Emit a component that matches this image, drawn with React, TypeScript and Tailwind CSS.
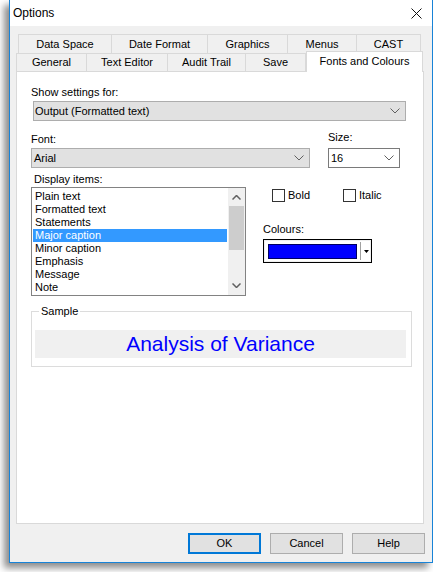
import React from "react";

const font = { fontFamily: '"Liberation Sans", Arial, sans-serif' };

function Chevron({ className = "" }: { className?: string }) {
  return (
    <svg width="10" height="6" viewBox="0 0 10 6" className={className}>
      <polyline points="0.5,0.5 5,5 9.5,0.5" fill="none" stroke="#606060" strokeWidth="1" />
    </svg>
  );
}

const row1 = [
  { label: "Data Space", w: "w-[94px]" },
  { label: "Date Format", w: "w-[96px]" },
  { label: "Graphics", w: "w-[80px]" },
  { label: "Menus", w: "w-[69px]" },
  { label: "CAST", w: "w-[64px]" },
];

const row2 = [
  { label: "General", w: "w-[71px]" },
  { label: "Text Editor", w: "w-[81px]" },
  { label: "Audit Trail", w: "w-[78px]" },
  { label: "Save", w: "w-[60px]" },
];

const items = [
  "Plain text",
  "Formatted text",
  "Statements",
  "Major caption",
  "Minor caption",
  "Emphasis",
  "Message",
  "Note",
];

export default function App() {
  return (
    <div className="w-[433px] h-[572px] bg-white pl-[9px] text-[11px] text-black" style={font}>
      <div className="w-[424px] h-[563px] flex flex-col bg-[#f0f0f0] border-x border-b border-[#1883d7] shadow-[-5px_5px_7px_rgba(0,0,0,0.45)]">
        {/* Title bar */}
        <div className="h-[26px] bg-white flex items-center justify-between pl-[3px] pr-[10px]">
          <span className="leading-[15px] text-[12px]">Options</span>
          <svg width="11" height="11" viewBox="0 0 11 11">
            <path d="M0.5 0.5 L10.5 10.5 M10.5 0.5 L0.5 10.5" stroke="#111" strokeWidth="1" />
          </svg>
        </div>

        <div className="flex-1 pt-[8px] pl-[6px]">
          {/* Tabs */}
          <div className="flex pl-[2px]">
            {row1.map((t, i) => (
              <div
                key={t.label}
                className={`${t.w} h-[19px] border-t border-r border-[#d9d9d9] ${i === 0 ? "border-l" : ""} flex items-center justify-center leading-[15px]`}
              >
                {t.label}
              </div>
            ))}
          </div>
          <div className="flex items-end h-[18px]">
            {row2.map((t, i) => (
              <div
                key={t.label}
                className={`${t.w} h-[18px] border-t border-r border-[#d9d9d9] ${i === 0 ? "border-l" : ""} flex items-center justify-center leading-[15px]`}
              >
                {t.label}
              </div>
            ))}
            <div className="w-[117px] h-[21px] -mb-px relative z-10 bg-white border-x border-t border-[#d9d9d9] flex items-start justify-center pt-[2px] leading-[15px]">
              Fonts and Colours
            </div>
          </div>

          {/* Panel */}
          <div className="w-[408px] h-[453px] bg-white border border-[#d9d9d9] px-[14px]">
            <div className="mt-[13px] leading-[15px]">Show settings for:</div>
            <div className="mt-[1px] ml-[2px] w-[373px] h-[20px] bg-[#e1e1e1] border border-[#adadad] flex items-center justify-between pl-[1px] pr-[5px] leading-[15px]">
              <span>Output (Formatted text)</span>
              <Chevron />
            </div>

            <div className="flex mt-[9px]">
              <div className="w-[279px]">
                <div className="leading-[15px] mt-[2px]">Font:</div>
                <div className="mt-[1px] w-[279px] h-[20px] bg-[#e1e1e1] border border-[#adadad] flex items-center justify-between pl-[2px] pr-[5px] leading-[15px]">
                  <span>Arial</span>
                  <Chevron />
                </div>
              </div>
              <div className="ml-[18px] w-[72px]">
                <div className="leading-[15px]">Size:</div>
                <div className="mt-[3px] w-[72px] h-[20px] bg-white border border-[#7a7a7a] flex items-center justify-between pl-[2px] pr-[5px] leading-[15px]">
                  <span>16</span>
                  <Chevron />
                </div>
              </div>
            </div>

            <div className="mt-[4px] pl-[3px] leading-[15px]">Display items:</div>

            <div className="flex">
              {/* List box */}
              <div className="w-[215px] h-[109px] border border-[#828282] flex">
                <div className="flex-1 pt-[2px] px-[1px]">
                  {items.map((it) => (
                    <div
                      key={it}
                      className={`h-[13px] leading-[13px] pl-[2px] ${it === "Major caption" ? "bg-[#3399ff] text-white" : ""}`}
                    >
                      {it}
                    </div>
                  ))}
                </div>
                <div className="w-[17px] bg-[#f0f0f0] flex flex-col items-center">
                  <svg width="9" height="5" viewBox="0 0 9 5" className="mt-[7px]">
                    <polyline points="0.5,4.5 4.5,0.5 8.5,4.5" fill="none" stroke="#606060" strokeWidth="1.5" />
                  </svg>
                  <div className="mt-[6px] w-[15px] h-[44px] bg-[#cdcdcd]" />
                  <div className="flex-1" />
                  <svg width="9" height="5" viewBox="0 0 9 5" className="mb-[7px]">
                    <polyline points="0.5,0.5 4.5,4.5 8.5,0.5" fill="none" stroke="#606060" strokeWidth="1.5" />
                  </svg>
                </div>
              </div>

              {/* Right controls */}
              <div className="ml-[17px] flex-1">
                <div className="flex items-center mt-[2px] h-[13px]">
                  <div className="ml-[9px] w-[71px] flex items-center">
                    <div className="w-[13px] h-[13px] border border-[#333] bg-white" />
                    <span className="ml-[3px] leading-[15px]">Bold</span>
                  </div>
                  <div className="w-[13px] h-[13px] border border-[#333] bg-white" />
                  <span className="ml-[3px] leading-[15px]">Italic</span>
                </div>
                <div className="mt-[20px] leading-[15px]">Colours:</div>
                <div className="mt-[2px] w-[109px] h-[24px] border border-black bg-[#f0f0f0] p-px">
                  <div className="w-full h-full border border-white bg-white flex items-center">
                    <div className="ml-[2px] w-[90px] h-[15px] bg-[#0000ff] border border-[#000060]" />
                    <div className="ml-[3px] w-px h-[18px] bg-[#a0a0a0]" />
                    <svg width="5" height="3" viewBox="0 0 5 3" className="ml-[3px]">
                      <polygon points="0,0 5,0 2.5,3" fill="#000" />
                    </svg>
                  </div>
                </div>
              </div>
            </div>

            {/* Sample */}
            <div className="relative mt-[15px] w-[381px] h-[56px] border border-[#dcdcdc] pt-[18px] pl-[3px]">
              <span className="absolute -top-[8px] left-[7px] bg-white px-[2px] leading-[15px]">Sample</span>
              <div className="w-[371px] h-[28px] bg-[#f0f0f0] flex items-center justify-center text-[21px] text-[#0000ff] leading-[28px]">
                Analysis of Variance
              </div>
            </div>
          </div>

          {/* Buttons */}
          <div className="flex justify-end gap-[9px] mt-[9px] pr-[7px]">
            <div className="w-[73px] h-[21px] bg-[#e1e1e1] border-2 border-[#0078d7] flex items-center justify-center leading-[15px]">
              OK
            </div>
            <div className="w-[73px] h-[21px] bg-[#e1e1e1] border border-[#adadad] flex items-center justify-center leading-[15px]">
              Cancel
            </div>
            <div className="w-[73px] h-[21px] bg-[#e1e1e1] border border-[#adadad] flex items-center justify-center leading-[15px]">
              Help
            </div>
          </div>
        </div>
      </div>
    </div>
  );
}
